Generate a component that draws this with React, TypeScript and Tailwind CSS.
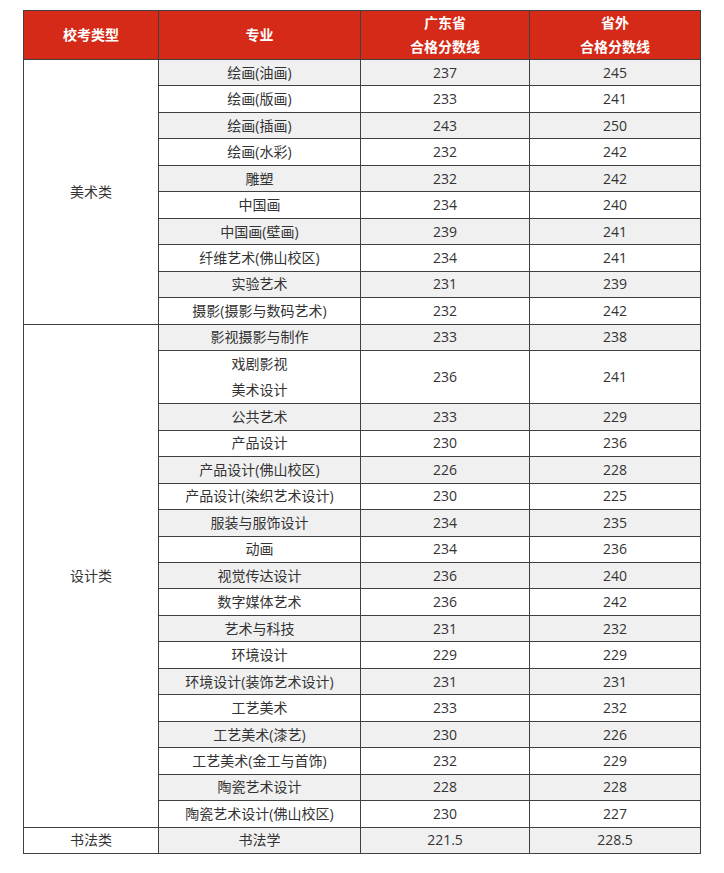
const meishu = [
  ['绘画(油画)', '237', '245'],
  ['绘画(版画)', '233', '241'],
  ['绘画(插画)', '243', '250'],
  ['绘画(水彩)', '232', '242'],
  ['雕塑', '232', '242'],
  ['中国画', '234', '240'],
  ['中国画(壁画)', '239', '241'],
  ['纤维艺术(佛山校区)', '234', '241'],
  ['实验艺术', '231', '239'],
  ['摄影(摄影与数码艺术)', '232', '242'],
];

const sheji = [
  ['影视摄影与制作', '233', '238'],
  ['戏剧影视\n美术设计', '236', '241'],
  ['公共艺术', '233', '229'],
  ['产品设计', '230', '236'],
  ['产品设计(佛山校区)', '226', '228'],
  ['产品设计(染织艺术设计)', '230', '225'],
  ['服装与服饰设计', '234', '235'],
  ['动画', '234', '236'],
  ['视觉传达设计', '236', '240'],
  ['数字媒体艺术', '236', '242'],
  ['艺术与科技', '231', '232'],
  ['环境设计', '229', '229'],
  ['环境设计(装饰艺术设计)', '231', '231'],
  ['工艺美术', '233', '232'],
  ['工艺美术(漆艺)', '230', '226'],
  ['工艺美术(金工与首饰)', '232', '229'],
  ['陶瓷艺术设计', '228', '228'],
  ['陶瓷艺术设计(佛山校区)', '230', '227'],
];

const groups = [
  { name: '美术类', rows: meishu },
  { name: '设计类', rows: sheji },
  { name: '书法类', rows: [['书法学', '221.5', '228.5']] },
];

const cell = 'border border-[#404040] text-center align-middle p-0';

export default function App() {
  let idx = 0;
  return (
    <div
      className="w-[724px] h-[873px] bg-white pt-[10px] pl-[23px]"
      style={{ fontFamily: '"Open Sans", "Noto Sans CJK SC", sans-serif' }}
    >
      <table className="border-collapse w-[677px] table-fixed text-[14px] text-[#333333]">
        <colgroup>
          <col className="w-[135px]" />
          <col className="w-[202px]" />
          <col className="w-[169px]" />
          <col className="w-[171px]" />
        </colgroup>
        <thead>
          <tr className="h-[48px] bg-[#d42a17] text-white font-bold leading-[24px]">
            <th className={cell}>校考类型</th>
            <th className={cell}>专业</th>
            <th className={cell}>
              广东省
              <br />
              合格分数线
            </th>
            <th className={cell}>
              省外
              <br />
              合格分数线
            </th>
          </tr>
        </thead>
        <tbody>
          {groups.map((g) =>
            g.rows.map((r, i) => {
              const gray = idx++ % 2 === 0;
              const bg = gray ? 'bg-[#f0f0f0]' : 'bg-white';
              const lines = r[0].split('\n');
              return (
                <tr
                  key={g.name + i}
                  className={lines.length > 1 ? 'h-[52.9px] leading-[26px]' : 'h-[26.47px] leading-[24px]'}
                >
                  {i === 0 && (
                    <td rowSpan={g.rows.length} className={cell + ' bg-white'}>
                      {g.name}
                    </td>
                  )}
                  <td className={cell + ' ' + bg}>
                    {lines.map((l, k) => (
                      <div key={k}>{l}</div>
                    ))}
                  </td>
                  <td className={cell + ' ' + bg}>{r[1]}</td>
                  <td className={cell + ' ' + bg}>{r[2]}</td>
                </tr>
              );
            })
          )}
        </tbody>
      </table>
    </div>
  );
}
